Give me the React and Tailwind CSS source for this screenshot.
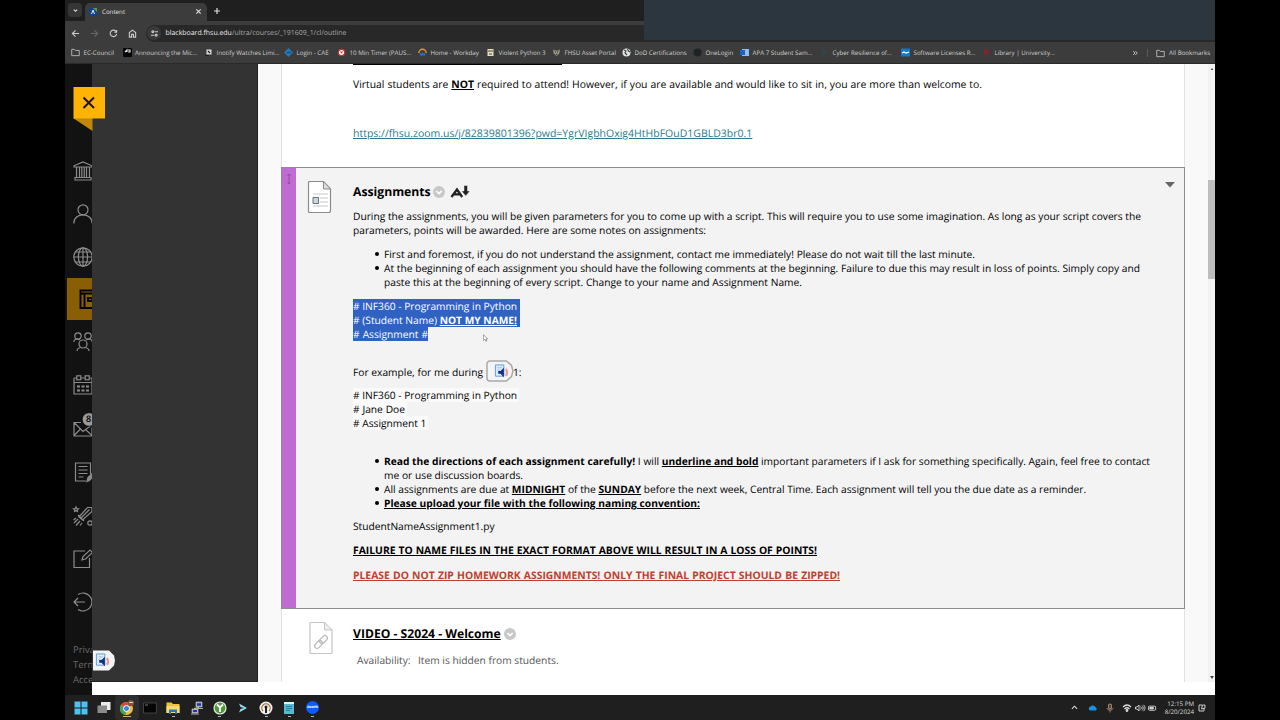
import React from "react";

const S = ({ children, className = "", vb = "0 0 20 20", sw = 1.2 }) => (
  <svg viewBox={vb} className={"shrink-0 overflow-visible " + className} fill="none" stroke="currentColor" strokeWidth={sw}>
    {children}
  </svg>
);

const L = ({ w, children }) => (
  <div className={"whitespace-nowrap [text-align-last:justify] " + w}>{children}</div>
);

const Li = ({ children }) => (
  <li className="relative">
    <span className="absolute left-[-9px] top-[5px] h-[4px] w-[4px] rounded-full bg-black" />
    {children}
  </li>
);

const Folder = () => (
  <S vb="0 0 10 10" sw={1} className="h-[9px] w-[9px] text-[#bbb]">
    <path d="M.8 8.500V1.500h3l1 1.200h4.400v5.800z" />
  </S>
);

const bookmarks = [
  { t: "EC-Council", w: "w-[51.500px]", i: <Folder /> },
  { t: "Announcing the Mic...", w: "w-[81.500px]", i: <S vb="0 0 9 9" className="h-[9px] w-[9px]"><rect width="9" height="9" rx="1" fill="#050505" stroke="none" /><path d="M2 4l2-2v2M5 2h2v2H5" stroke="#ddd" /></S> },
  { t: "Inotify Watches Limi...", w: "w-[80px]", i: <S vb="0 0 9 9" className="h-[9px] w-[9px]"><path d="M2.500 1.500h5v5h-5z" fill="#d8d8d8" stroke="none" /><path d="M1 7.500h4M4 3l2 2" stroke="#222" /></S> },
  { t: "Login - CAE", w: "w-[53px]", i: <S vb="0 0 9 9" className="h-[9px] w-[9px]"><path d="M4.500 0L9 4.500 4.500 9 0 4.500z" fill="#2477bd" stroke="none" /><path d="M3 4.500h4" stroke="#174b78" /></S> },
  { t: "10 Min Timer (PAUS...", w: "w-[81px]", i: <S vb="0 0 9 9" className="h-[9px] w-[9px]"><circle cx="4.500" cy="4.500" r="3.200" fill="#fff" stroke="#b33" /><path d="M3.500 3.500l1 1.300 1-1.300" stroke="#b33" /></S> },
  { t: "Home - Workday", w: "w-[68px]", i: <S vb="0 0 9 9" className="h-[9px] w-[9px]"><path d="M.8 5a3.700 3.700 0 017.400 0" stroke="#e29a28" strokeWidth="1.400" /><path d="M2 5l1 2.500L4.500 5 6 7.500 7 5" stroke="#2673c0" /></S> },
  { t: "Violent Python 3", w: "w-[66px]", i: <S vb="0 0 9 9" className="h-[9px] w-[9px]"><path d="M1.500 1h6v7h-6z" fill="#e5dfc8" stroke="none" /><path d="M2 3h5M3 6h3" stroke="#464326" /></S> },
  { t: "FHSU Asset Portal", w: "w-[70px]", i: <S vb="0 0 9 9" className="h-[9px] w-[9px]"><path d="M1 1.500l2 1h3l2-1-.7 4L4.500 8 1.700 5.500z" fill="#98937f" stroke="none" /><path d="M3 4h1M5 4h1M4.500 6v1" stroke="#333" /></S> },
  { t: "DoD Certifications", w: "w-[71px]", i: <S vb="0 0 9 9" className="h-[9px] w-[9px]"><circle cx="4.500" cy="4.500" r="4" fill="#e4e4e4" stroke="none" /><path d="M2 2l2 1-1 2 2 2M5.500 1l1 2 1.500 1" stroke="#444" /></S> },
  { t: "OneLogin", w: "w-[47px]", i: <S vb="0 0 9 9" className="h-[9px] w-[9px]"><circle cx="4.500" cy="4.500" r="4" fill="#1e2326" stroke="none" /></S> },
  { t: "APA 7 Student Sam...", w: "w-[80px]", i: <S vb="0 0 9 9" className="h-[9px] w-[9px]"><path d="M2 1h7v7H2z" fill="#8fbdf0" stroke="none" /><path d="M0 2h5v5H0z" fill="#1d62c4" stroke="none" /></S> },
  { t: "Cyber Resilience of...", w: "w-[81px]", i: <S vb="0 0 9 9" className="h-[9px] w-[9px]"><circle cx="4.500" cy="4.500" r="2.500" fill="#2b4746" stroke="none" /></S> },
  { t: "Software Licenses R...", w: "w-[81px]", i: <S vb="0 0 9 9" className="h-[9px] w-[9px]"><path d="M0 .5h9v8H0z" fill="#0a7cc8" stroke="none" /><path d="M1 5l2-1 2 1 3-1" stroke="#fff" /></S> },
  { t: "Library | University...", w: "w-[80px]", i: <S vb="0 0 9 9" className="h-[9px] w-[9px]"><path d="M2 1.500h5v4L4.500 8 2 5.500z" fill="#7c2530" stroke="none" /></S> },
];

const nav = [
  ["h-[42px]", <><path d="M1 6V4.800L10 1l9 3.800V6zM2 16.500h16v2.500H2zM3.500 6v10.500M6.500 6v10.500M8.800 6v10.500M11.200 6v10.500M13.500 6v10.500M16.500 6v10.500" /></>],
  ["h-[43px]", <><circle cx="10" cy="5.800" r="5" /><path d="M.8 19.500c0-11.400 18.400-11.400 18.400 0" /></>],
  ["h-[43px]", <><circle cx="10" cy="10" r="9.200" /><ellipse cx="10" cy="10" rx="4.600" ry="9.200" /><path d="M10 .8v18.400M.8 10h18.400M2.500 5h15M2.500 15h15" /></>],
  ["h-[42px]", <g transform="translate(4 0)" strokeWidth="1.900"><path d="M1.500 1.500h19v17.500h-19zM1.500 4.500h19M5.500 4.500v14.500" /><rect x="9" y="9" width="4.500" height="3" /></g>],
  ["h-[43px]", <><circle cx="5" cy="4" r="3.200" /><circle cx="15" cy="4" r="3.200" /><circle cx="10" cy="12" r="4" /><path d="M.8 10c0-2 1.500-3 4-3l2 1M19.200 10c0-2-1.500-3-4-3l-2 1M4 19c0-2 1.500-3 3.500-3.500M16 19c0-2-1.500-3-3.500-3.500" /></>],
  ["h-[43px]", <><path d="M1 3h2.500M8 3h4M16.500 3H19v16H1V3M1 7.500h18" /><rect x="3.800" y=".8" width="4" height="4" /><rect x="12.200" y=".8" width="4" height="4" /><path d="M4 11.500h3m1.500 0h3m1.500 0h3M4 15.500h3m1.500 0h3m1.500 0h3" strokeWidth="2" /></>],
  ["h-[43px]", <g transform="translate(0 -1.500)"><path d="M8 6H1v13.500h18V11M1 6l9 9 8-6M1 19l6.500-6.500M19 19l-6.500-6" /><circle cx="16" cy="3" r="6.800" fill="#9a9a9a" stroke="#121212" strokeWidth=".8" /></g>],
  ["h-[45px]", <><path d="M13 19H2.500V1H17.500v11M5.500 4.500h9M5.500 8h9M5.500 11.500h9M5.500 15h5" /><path d="M14 19.500l1-4 4-4 1 3-3.500 4z" fill="currentColor" /></>],
  ["h-[43px]", <><path d="M6 11L14.500 1.500h4.500v4L9.500 14zM7.500 12.500l9-9M5 9l6 6M5 13l-4 4M7 15l-4 4.500M9 17l-2 2.500M3 12l-2.500 2" /><circle cx="17" cy="17" r="2.200" /><path d="M3 1l.7 1.500 1.800.3-1.300 1 .3 1.700L3 4.700l-1.500.8.3-1.700-1.300-1 1.800-.3z" /></>],
  ["h-[44px]", <><path d="M12 2H1v16.500h15.500V9" /><path d="M9 11l1-3.500L17 1l2.500 2.500L12.500 10z" /></>],
  ["h-[42px]", <><path d="M5 2.500a9 9 0 110 15" /><path d="M12 10H1M5 6l-4 4 4 4" /></>],
];

const Speaker = ({ className }) => (
  <svg viewBox="0 0 16 16" className={className}>
    <path d="M1.500 1h9v12h-9z" fill="#dcecfb" stroke="#5a9ad8" />
    <path d="M3.500 4h5M3.500 6.500h3" stroke="#9cc4ea" />
    <path d="M4.500 7.500H7l3.500-3.500v10L7 10.500H4.500z" fill="#0b2f86" />
    <path d="M12.500 5.500c1.800 2 1.800 5 0 7" stroke="#f09a92" strokeWidth="2.500" fill="none" />
  </svg>
);

const Chevron = () => (
  <S vb="0 0 12 12" sw={1.6} className="h-[12px] w-[12px] text-white">
    <circle cx="6" cy="6" r="6" fill="#c8c8c8" stroke="none" />
    <path d="M3.300 5L6 7.600 8.700 5" />
  </S>
);

const task = [
  <svg viewBox="0 0 14 14" className="h-[14px] w-[14px]"><path d="M.5.5h6v6h-6zM7.500.5h6v6h-6zM.5 7.500h6v6h-6zM7.500 7.500h6v6h-6z" fill="#4cc2f1" /></svg>,
  <svg viewBox="0 0 14 14" className="h-[14px] w-[14px]"><path d="M4 1h9.500v8H4z" fill="#ececec" /><path d="M.5 4.500H10V12H.5z" fill="#8b8b8b" /></svg>,
  <svg viewBox="0 0 16 16" className="h-[16px] w-[16px]"><circle cx="7.500" cy="8.500" r="6.500" fill="#e8c23a" /><path d="M7.500 8.500L2 5a6.500 6.500 0 0111 0z" fill="#d9463a" /><path d="M7.500 8.500L2 5a6.500 6.500 0 004.500 10z" fill="#43a554" /><circle cx="7.500" cy="8.500" r="3" fill="#3f7fe0" stroke="#fff" /><circle cx="12" cy="3" r="3" fill="#7b5540" /><path d="M10 2.500h4" stroke="#ddb" /></svg>,
  <svg viewBox="0 0 14 12" className="h-[12px] w-[14px]"><path d="M.5 1h13v10H.5z" fill="#050505" stroke="#555" strokeWidth=".7" /><path d="M2 3h3" stroke="#aaa" strokeWidth=".7" /></svg>,
  <svg viewBox="0 0 14 14" className="h-[14px] w-[14px]"><path d="M.5 1.500h5l1.500 1.500h6.500v9H.5z" fill="#f0c33f" /><path d="M.5 5h13v7H.5z" fill="#fbdb6d" /><path d="M3 8.500h8v4.500H9v-2H5v2H3z" fill="#2478b8" /></svg>,
  <svg viewBox="0 0 14 14" className="h-[14px] w-[14px]"><path d="M6 1h6v5H6zM2 8h6v4H2z" fill="#9aa2cf" stroke="#ccc" strokeWidth=".6" /><path d="M7 2.200h4v2.500H7zM3 9h4v2H3z" fill="#2439a0" /><path d="M9 6.500L4 7.500" stroke="#ddd04a" /><path d="M5 7h8v1H5zM1 12.500h8v1H1z" fill="#aaa" /></svg>,
  <svg viewBox="0 0 14 14" className="h-[14px] w-[14px]"><circle cx="7" cy="7" r="6" fill="#4e9a3a" stroke="#e8efe4" strokeWidth="1.200" /><path d="M4 3.500l3 3 3-3M7 6.500V11" stroke="#fff" strokeWidth="1.800" fill="none" /></svg>,
  <svg viewBox="0 0 14 14" className="h-[14px] w-[14px]"><path d="M3 2.500l8 4.500-8 4.500 1.500-3.500L8 7 4.500 6z" fill="#8fe0ec" /></svg>,
  <svg viewBox="0 0 14 14" className="h-[14px] w-[14px]"><circle cx="7" cy="7" r="6.500" fill="#f4f1ec" /><path d="M4 10a4.200 4.200 0 116 0" fill="none" stroke="#9a6a3f" strokeWidth="1.200" /><circle cx="7" cy="6" r="1.500" fill="#222" /><path d="M6 7h2v5H6z" fill="#222" /></svg>,
  <svg viewBox="0 0 14 14" className="h-[14px] w-[14px]"><path d="M2 1h10v12H2z" fill="#56b9cf" /><path d="M2 1h10v2H2z" fill="#cfe" /><path d="M4 5.500h6M4 7.500h6M4 9.500h4" stroke="#1c6f88" strokeWidth=".8" /></svg>,
  <span className="flex h-[13px] w-[13px] items-center justify-center rounded-full bg-[#0b5cff] text-[4px] font-bold text-white">zoom</span>,
];

export default function App() {
  return (
    <div className="relative flex h-[720px] w-[1280px] overflow-hidden bg-black pl-[65px] font-['Open_Sans',sans-serif] text-black [text-rendering:geometricPrecision]">
      <div className="relative flex w-[1150px] flex-col">
        {/* tab strip */}
        <div className="flex h-[21px] shrink-0 items-end bg-[#1f1f1f] pl-[3px]">
          <div className="mb-[4px] flex h-[14px] w-[14px] items-center justify-center rounded-[4px] bg-[#363636] text-[#ddd]">
            <S vb="0 0 8 8" sw={1.2} className="h-[7px] w-[7px]"><path d="M2 3l2 2 2-2" /></S>
          </div>
          <div className="ml-[3px] flex h-[18px] w-[122px] items-center rounded-t-[5px] bg-[#3c3c3c] pb-[1px] pl-[4px] pr-[5px] text-[6.200px] text-[#e2e2e2]">
            <svg viewBox="0 0 8 8" className="mr-[5px] h-[8px] w-[8px]"><path d="M0 0h8v8H0z" fill="#123f91" /><path d="M4 0h4v4z" fill="#4aa546" /><path d="M2.500 6L4 2l1.500 4" stroke="#fff" fill="none" strokeWidth=".9" /></svg>
            <span className="flex-1">Content</span>
            <S vb="0 0 8 8" className="h-[7px] w-[7px]"><path d="M1.500 1.500l5 5M6.500 1.500l-5 5" /></S>
          </div>
          <S vb="0 0 8 8" className="mb-[6px] ml-[6px] h-[8px] w-[8px] text-[#ddd]"><path d="M4 1v6M1 4h6" /></S>
        </div>
        {/* toolbar */}
        <div className="flex h-[22px] shrink-0 items-center bg-[#3c3c3c] pl-[6px] pt-[2px] text-[#ccc]">
          <S vb="0 0 10 10" className="h-[9px] w-[9px]"><path d="M9 5H1.500M5 1.500L1.500 5 5 8.500" /></S>
          <S vb="0 0 10 10" className="ml-[10px] h-[9px] w-[9px] text-[#686868]"><path d="M1 5h7.500M5 1.500L8.500 5 5 8.500" /></S>
          <S vb="0 0 10 10" className="ml-[10px] h-[9px] w-[9px]"><path d="M8.500 5.500a3.600 3.600 0 11-1-3.200L8.500 3.500M8.500 1v2.700H6" /></S>
          <S vb="0 0 10 10" className="ml-[10px] h-[9px] w-[9px]"><path d="M1.500 9V4L5 1.200 8.500 4v5H6V6H4v3z" /></S>
          <div className="ml-[9px] flex h-[17px] flex-1 items-center rounded-l-full bg-[#282828]">
            <div className="ml-[1px] mr-[4.500px] flex h-[14px] w-[14px] items-center justify-center rounded-full bg-[#3a3a3a]">
              <S vb="0 0 8 8" className="h-[7px] w-[7px]"><circle cx="2" cy="2" r="1" /><path d="M4 2h4M0 6h4" /><circle cx="6" cy="6" r="1" /></S>
            </div>
            <span className="pt-[2px] text-[6.950px] text-[#aaa]"><span className="text-[#ececec]">blackboard.fhsu.edu</span>/ultra/courses/_191609_1/cl/outline</span>
          </div>
        </div>
        {/* bookmarks bar */}
        <div className="flex h-[21px] shrink-0 items-center border-b border-[#2a2a2a] bg-[#3c3c3c] pl-[6px] text-[6.200px] text-[#d0d0d0]">
          {bookmarks.map((b) => (
            <div key={b.t} className={"flex shrink-0 items-center whitespace-nowrap " + b.w}>
              <span className="w-[12.500px] shrink-0">{b.i}</span>
              {b.t}
            </div>
          ))}
          <S vb="0 0 8 8" className="ml-[70px] h-[6px] w-[6px]"><path d="M1.500 1.500L4 4 1.500 6.500M4.500 1.500L7 4 4.500 6.500" /></S>
          <span className="ml-[9px] h-[8px] w-px bg-[#5a5a5a]" />
          <span className="ml-[8px] mr-[4px]"><Folder /></span>
          <span className="whitespace-nowrap">All Bookmarks</span>
        </div>
        <div className="absolute left-[579px] top-0 h-[40px] w-[571px] bg-[#2c363f]" />

        {/* page */}
        <div className="flex h-[631px] shrink-0 overflow-hidden bg-white">
          <div className="flex w-[27px] shrink-0 flex-col overflow-hidden bg-[#121212] pt-[86px] text-[#8c8c8c]">
            {nav.map(([h, p], i) => (
              <div key={i} className={"relative flex shrink-0 items-center pl-[8px] " + h + (i === 3 ? " ml-[2px] bg-[#8a5e05] pl-[6px] text-black" : "")}>
                <S className="h-[20px] w-[20px]">{p}</S>
                {i === 6 && <span className="absolute left-[21px] top-[6px] text-[9px] font-semibold leading-[13px] text-black">8</span>}
              </div>
            ))}
            <div className="mt-[19px] whitespace-nowrap pl-[8px] text-[9.500px] leading-[15px] text-[#6c6c6c]">
              <div>Privacy</div><div>Terms</div><div>Accessibility</div>
            </div>
          </div>
          <div className="h-[618px] w-[166px] shrink-0 border-b border-r border-[#222] bg-[#333]" />
          <div className="h-[618px] w-[23px] shrink-0 bg-[#f9f9f9]" />
          <div className="flex h-[618px] w-[904px] shrink-0 flex-col text-[10.220px] leading-[14px]">
            <div className="h-[103px] shrink-0 border-x border-[#e2e2e2] pl-[71px]">
              <div className="h-[1px] w-[209px] border-b border-black" />
              <div className="mt-[13px] text-[10.390px]"><L w="w-[629px]">Virtual students are <b className="underline">NOT</b> required to attend! However, if you are available and would like to sit in, you are more than welcome to.</L></div>
              <div className="mt-[35px] whitespace-nowrap text-[10.500px] text-[#287b87] underline">https://fhsu.zoom.us/j/82839801396?pwd=YgrVIgbhOxig4HtHbFOuD1GBLD3br0.1</div>
            </div>
            <div className="relative flex h-[442px] shrink-0 border border-[#8c8c8c] bg-[#f3f3f3]">
              <div className="flex w-[14px] shrink-0 justify-center bg-[#c06bd2] pt-[5px]">
                <S vb="0 0 6 12" sw={0.8} className="h-[12px] w-[6px] text-[#8d489d]"><path d="M3 1v10M1.500 3L3 1l1.500 2M1.500 9L3 11l1.500-2" /></S>
              </div>
              <div className="w-[57px] shrink-0 pl-[11px] pt-[12px]">
                <svg viewBox="0 0 26 34" className="h-[34px] w-[26px]"><path d="M2.500 1.500h14l7 7.500v21.500a2 2 0 01-2 2h-19a1 1 0 01-1-1v-29a1 1 0 011-1z" fill="#fff" stroke="#8a8d90" strokeWidth="1.200" /><path d="M16.500 1.500V9h7z" fill="#ddd" stroke="#8a8d90" /><path d="M6 14h15M13 18h8M13 22h8M6 26h15" stroke="#c4c8cc" /><path d="M6 17.500h5.500v6H6z" fill="#cbd8e2" stroke="#66727c" /></svg>
              </div>
              <div className="flex-1 pt-[16px]">
                <div className="flex h-[15px] items-center">
                  <h3 className="w-[80px] whitespace-nowrap text-[12.200px] font-bold leading-[15px]">Assignments</h3>
                  <Chevron />
                  <svg viewBox="0 0 20 14" className="ml-[5px] h-[14px] w-[20px]"><path d="M1.500 12L7 4.500 12.200 12M4 9.300h6" fill="none" stroke="#222" strokeWidth="2.300" /><path d="M14 .5h3.500V6H20l-4.300 5L11.500 6H14z" fill="#222" stroke="#f3f3f3" strokeWidth=".5" /></svg>
                </div>
                <div className="mt-[10px]">
                  <L w="w-[788px]">During the assignments, you will be given parameters for you to come up with a script. This will require you to use some imagination. As long as your script covers the</L>
                  <L w="w-[353px]">parameters, points will be awarded. Here are some notes on assignments:</L>
                </div>
                <ul className="mt-[10px] pl-[31px]">
                  <Li><L w="w-[591px]">First and foremost, if you do not understand the assignment, contact me immediately! Please do not wait till the last minute.</L></Li>
                  <Li>
                    <L w="w-[756px]">At the beginning of each assignment you should have the following comments at the beginning. Failure to due this may result in loss of points. Simply copy and</L>
                    <L w="w-[418px]">paste this at the beginning of every script. Change to your name and Assignment Name.</L>
                  </Li>
                </ul>
                <div className="mt-[10px] text-white">
                  <div className="w-[167px] bg-[#2f62c1]"><L w="w-[164px]"># INF360 - Programming in Python</L></div>
                  <div className="w-[167px] bg-[#2f62c1]"><L w="w-[164px]"># (Student Name) <b className="underline">NOT MY NAME!</b></L></div>
                  <div className="w-[75px] bg-[#2f62c1]"><L w="w-[75px]"># Assignment #</L></div>
                </div>
                <div className="relative mt-[24px] flex">
                  <L w="w-[130px]">For example, for me during</L>
                  <span className="ml-[30px]">1:</span>
                  <div className="absolute left-[133px] top-[-5px] flex h-[22px] w-[28px] items-center">
                    <svg viewBox="0 0 28 22" className="absolute inset-0 h-[22px] w-[28px]"><path d="M4 1h16.500l5 4.500L27 11l-1.500 5.500-5 4.500H4a3 3 0 01-3-3V4a3 3 0 013-3z" fill="#f4f4f4" stroke="#a9a9a9" strokeWidth="1.500" /></svg>
                    <Speaker className="relative ml-[8px] h-[15px] w-[15px]" />
                  </div>
                </div>
                <div className="mt-[9px]">
                  <div className="w-[166px] bg-[#fafafa]"><L w="w-[164px]"># INF360 - Programming in Python</L></div>
                  <div className="w-[54px] bg-[#fafafa]"><L w="w-[52px]"># Jane Doe</L></div>
                  <div className="w-[75px] bg-[#fafafa]"><L w="w-[73px]"># Assignment 1</L></div>
                </div>
                <ul className="mt-[24px] pl-[31px]">
                  <Li>
                    <L w="w-[766px]"><b>Read the directions of each assignment carefully!</b> I will <b className="underline">underline and bold</b> important parameters if I ask for something specifically. Again, feel free to contact</L>
                    <L w="w-[139px]">me or use discussion boards.</L>
                  </Li>
                  <Li><L w="w-[702px]">All assignments are due at <b className="underline">MIDNIGHT</b> of the <b className="underline">SUNDAY</b> before the next week, Central Time. Each assignment will tell you the due date as a reminder.</L></Li>
                  <Li><L w="w-[316px]"><b className="underline">Please upload your file with the following naming convention:</b></L></Li>
                </ul>
                <div className="mt-[9px]">StudentNameAssignment1.py</div>
                <div className="mt-[11px] text-[10.350px] font-bold underline"><L w="w-[464px]">FAILURE TO NAME FILES IN THE EXACT FORMAT ABOVE WILL RESULT IN A LOSS OF POINTS!</L></div>
                <div className="mt-[11px] text-[10.350px] font-bold text-[#c0402f] underline"><L w="w-[487px]">PLEASE DO NOT ZIP HOMEWORK ASSIGNMENTS! ONLY THE FINAL PROJECT SHOULD BE ZIPPED!</L></div>
              </div>
              <svg viewBox="0 0 10 6" className="absolute right-[9px] top-[14px] h-[6px] w-[10px]"><path d="M0 0h10L5 5.500z" fill="#666" /></svg>
            </div>
            <div className="flex flex-1 overflow-hidden border-x border-[#e2e2e2]">
              <div className="w-[71px] shrink-0 pl-[26px] pt-[12px]">
                <svg viewBox="0 0 26 34" className="h-[34px] w-[26px]"><path d="M2.500 1.500h14l7.500 7.500v22.500a1 1 0 01-1 1h-20a1 1 0 01-1-1v-29a1 1 0 011-1z" fill="#fff" stroke="#c4c4c4" strokeWidth="1.200" /><path d="M16.500 1.500V9h7" fill="#eee" stroke="#c4c4c4" /><g transform="rotate(-45 13 21)" fill="none" stroke="#b8b8b8" strokeWidth="1.200"><rect x="5" y="18.500" width="9" height="5" rx="2.500" /><rect x="12" y="18.500" width="9" height="5" rx="2.500" /></g></svg>
              </div>
              <div className="pt-[17px]">
                <div className="flex h-[15px] items-center">
                  <h3 className="w-[151px] whitespace-nowrap text-[12.150px] font-bold leading-[15px] underline">VIDEO - S2024 - Welcome</h3>
                  <Chevron />
                </div>
                <div className="mt-[12px] flex pl-[4px] text-[#555]">
                  <span className="w-[61px]">Availability:</span>
                  <L w="w-[138px]">Item is hidden from students.</L>
                </div>
              </div>
            </div>
          </div>
          <div className="h-[618px] w-[23px] shrink-0 bg-[#f9f9f9]" />
          <div className="flex h-[618px] flex-1 flex-col items-center bg-[#f1f1f1] pt-[4px]">
            <svg viewBox="0 0 4 3" className="h-[2px] w-[4px]"><path d="M0 3l2-3 2 3z" fill="#444" /></svg>
            <div className="mt-[110px] h-[99px] w-full bg-[#bdbdbd]" />
            <svg viewBox="0 0 4 3" className="mt-auto mb-[3px] h-[3px] w-[4px]"><path d="M0 0l2 3 2-3z" fill="#444" /></svg>
          </div>
        </div>

        {/* overlays on the page */}
        <svg viewBox="0 0 32 44" className="absolute left-[8px] top-[87px] h-[44px] w-[32px]"><path d="M0 31h19.500v13z" fill="#c28608" /><path d="M.5 0h31.500v31.500H.5z" fill="#ffb305" /><path d="M10.500 10.500l10.500 10.500M21 10.500L10.500 21" stroke="#1a1205" strokeWidth="1.900" /></svg>
        <div className="absolute left-[28px] top-[650px] h-[21px] w-[22px]">
          <svg viewBox="0 0 22 21" className="absolute inset-0 h-[21px] w-[22px]"><path d="M0 .5h16l5 5 1 5-1 5-5 5H0z" fill="#f4f4f4" /></svg>
          <Speaker className="absolute left-[2px] top-[3px] h-[15px] w-[15px]" />
        </div>
        <svg viewBox="0 0 6 9" className="absolute left-[418px] top-[334px] h-[8px] w-[5px]"><path d="M.5.5v7l1.800-1.500L3.500 8.500l1-.5-1-2.300h2z" fill="#fff" stroke="#666" strokeWidth=".7" /></svg>

        {/* taskbar */}
        <div className="flex h-[25px] shrink-0 items-center bg-[#1f1f1f]">
          <div className="flex w-[264px] pl-[4px]">
            {task.map((t, i) => (
              <div key={i} className={"relative flex h-[25px] w-[23.200px] shrink-0 items-center justify-center " + (i === 2 ? "rounded bg-[#2d2d2d]" : "")}>
                {t}
                {[2, 4, 6, 8, 9, 10].includes(i) && <span className={"absolute bottom-[3px] h-px " + (i === 2 ? "w-[8px] bg-[#e0a36f]" : "w-[3px] bg-[#b5b5b5]")} />}
              </div>
            ))}
          </div>
          <div className="ml-auto flex items-center pr-[9px] text-[#ddd]">
            <S vb="0 0 8 8" className="h-[7px] w-[7px]"><path d="M1 5.500l3-3 3 3" /></S>
            <svg viewBox="0 0 10 7" className="ml-[10px] h-[7px] w-[10px]"><path d="M2 6.500a2 2 0 01.3-3.800 3 3 0 015.200.5A2 2 0 018 6.500z" fill="#1d8fe0" /></svg>
            <S vb="0 0 8 10" className="ml-[8px] h-[10px] w-[8px] text-[#b98b7a]"><rect x="2.700" y="1" width="2.600" height="5" rx="1.300" /><path d="M1 5c0 3 6 3 6 0M4 7.500V9.500" strokeWidth=".8" /></S>
            <S vb="0 0 10 8" className="ml-[8px] h-[8px] w-[10px]"><path d="M1 3c2.500-2.500 5.500-2.500 8 0M2.500 5c1.500-1.500 3.500-1.500 5 0" /><circle cx="5" cy="6.500" r=".8" fill="currentColor" /></S>
            <S vb="0 0 10 8" sw={0.9} className="ml-[3px] h-[8px] w-[10px]"><path d="M.5 3h1.500l2-2v6L2 5H.5zM5.500 2.500c1 1 1 2 0 3M7 1.500c1.600 1.500 1.600 3.500 0 5M8.500.8c2 2 2 4.400 0 6.400" /></S>
            <S vb="0 0 10 8" sw={1} className="ml-[3px] h-[8px] w-[9px]"><rect x=".5" y="2" width="8" height="4.500" rx="1" /><path d="M2 3.500h4v1.500H2z" fill="currentColor" /></S>
            <div className="ml-[6px] w-[31px] whitespace-nowrap text-right text-[6.200px] leading-[8px]"><div>12:15 PM</div><div>8/20/2024</div></div>
            <S vb="0 0 8 8" sw={0.9} className="ml-[4px] h-[8px] w-[8px]"><path d="M4 1H1v6h5V4M4.500 1H7v3L3.500 5z" /></S>
          </div>
        </div>
      </div>
    </div>
  );
}
